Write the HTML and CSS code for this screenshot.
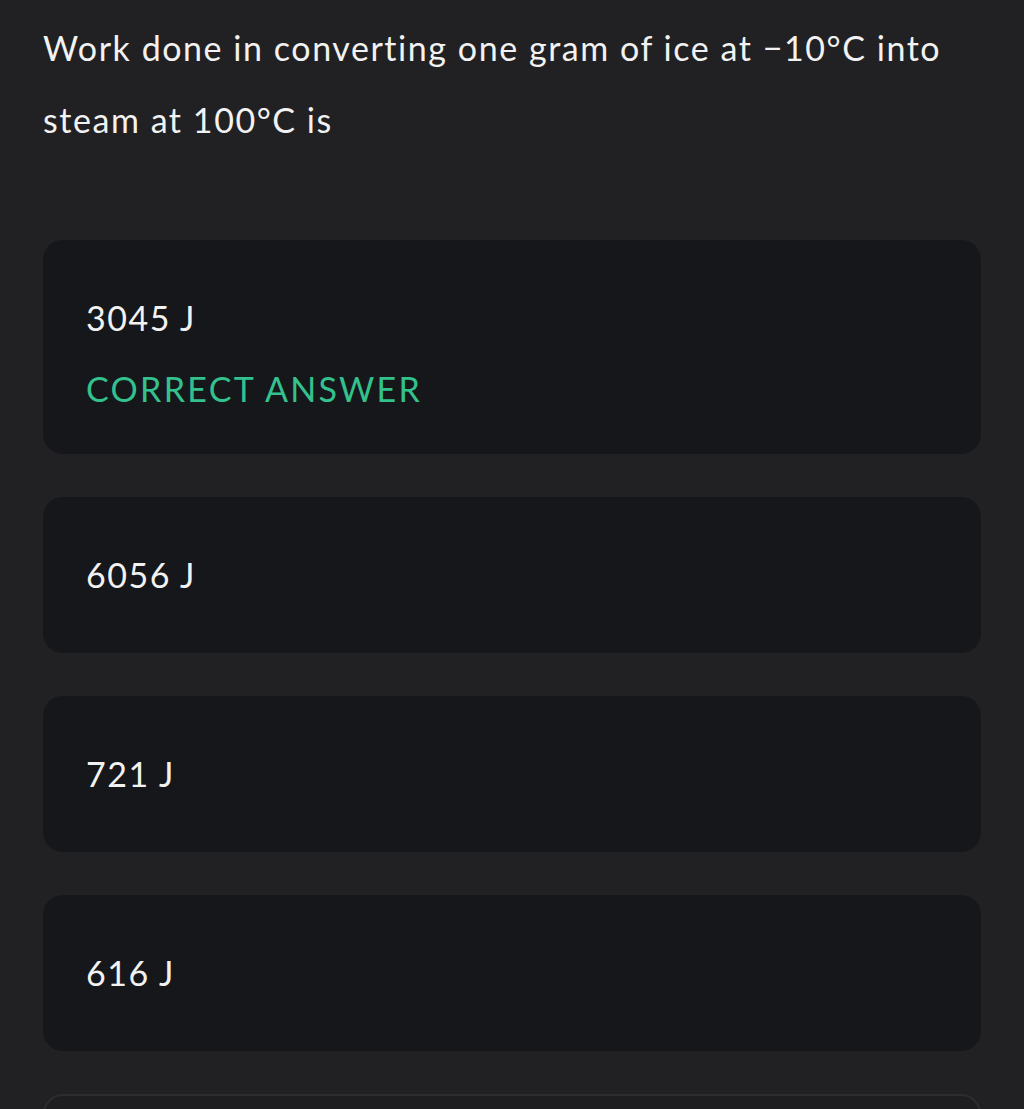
FILE: index.html
```html
<!DOCTYPE html>
<html lang="en">
<head>
  <meta charset="UTF-8" />
  <meta name="viewport" content="width=device-width, initial-scale=1.0"/>
  <title>Question</title>
  <link rel="stylesheet" href="styles.css">
</head>
<body>

  <!-- Question text -->
  <div class="question">
    Work done in converting one gram of ice at −10°C into steam at 100°C is
  </div>

  <!-- Answer options -->
  <div class="options">
    <div class="option correct">
      <div class="option-text">3045 J</div>
      <div class="option-label">CORRECT ANSWER</div>
    </div>
    <div class="option">
      <div class="option-text">6056 J</div>
    </div>
    <div class="option">
      <div class="option-text">721 J</div>
    </div>
    <div class="option">
      <div class="option-text">616 J</div>
    </div>
    <div class="option next"></div>
  </div>

</body>
</html>
```

FILE: styles.css
```css
body {
  margin: 0;
  background: #212123;
  color: #f2f2f2;
  font-family: Lato, "Noto Sans", sans-serif;
  font-variant-ligatures: none;
  overflow: hidden;
  height: 1109px;
}
/* Question block */
.question {
  padding: 12px 43px 0;
  font-size: 34px;
  line-height: 72px;
  letter-spacing: 1.55px;
}
/* List of answer cards */
.options {
  margin-top: 84px;
  padding: 0 43px;
  display: flex;
  flex-direction: column;
  gap: 43px;
}
.option {
  background: #16171b;
  border-radius: 20px;
  padding: 45px 43px;
}
.option-text {
  font-size: 34px;
  line-height: 66px;
  letter-spacing: 1.5px;
}
.option-label {
  margin-top: 18px;
  font-size: 34px;
  line-height: 40px;
  letter-spacing: 2.3px;
  color: #33c18d;
}
.option.next {
  height: 120px;
  background: #1e1e21;
  border: 2px solid #2c2d30;
  padding: 0;
}
```
